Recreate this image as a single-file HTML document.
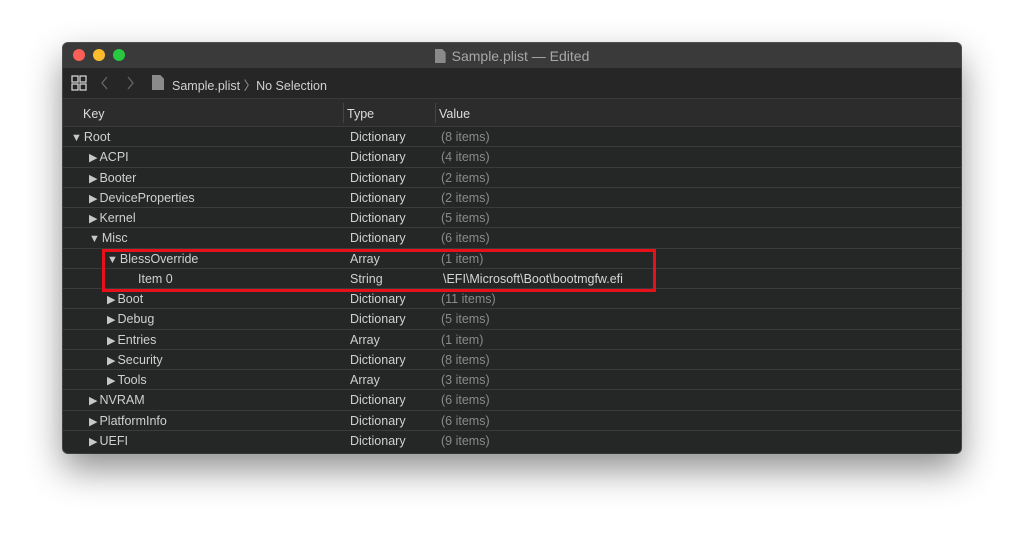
<!DOCTYPE html>
<html><head><meta charset="utf-8"><style>
*{margin:0;padding:0;box-sizing:border-box}
body{width:1024px;height:537px;background:#fff;font-family:"Liberation Sans",sans-serif;position:relative;overflow:hidden}
.win{position:absolute;left:63px;top:43px;width:898px;height:410px;background:#252626;border-radius:5px;overflow:hidden;box-shadow:0 16px 36px rgba(0,0,0,.45),0 0 0 1px #555;}
.title{position:absolute;left:0;top:0;width:100%;height:25px;background:#3a3a3a;}
.title .t{position:absolute;left:0;width:100%;top:5px;text-align:center;color:#a8a8a8;font-size:14px}
.dot{position:absolute;top:6px;width:12px;height:12px;border-radius:50%}
.tool{position:absolute;left:0;top:25px;width:100%;height:31px;background:#262626;border-bottom:1px solid #3a3a3a}
.hdr{position:absolute;left:0;top:56px;width:100%;height:28px;background:#2c2c2c;border-bottom:1px solid #3c3c3c;color:#dcdcdc;font-size:12.5px}
.hdr span{position:absolute;top:8px}
.sep{position:absolute;top:4px;width:1px;height:20px;background:#444}
.row{position:absolute;left:0;width:100%;height:20.25px;border-bottom:1px solid #3a3b3b;font-size:12.5px;color:#d0d0d0}
.row>span{position:absolute;top:3px;white-space:nowrap}
.row .v{left:378px;color:#8a8a8a}
.row .ty{left:287px}
.row .tri{position:static;font-size:11px;color:#c8c8c8;margin-right:2px;vertical-align:0px}
</style></head><body>
<div class="win">
 <div class="title">
  <div class="dot" style="left:10px;background:#fc5f57"></div>
  <div class="dot" style="left:30px;background:#fdbc2e"></div>
  <div class="dot" style="left:50px;background:#28c840"></div>
  <div class="t"><span style="display:inline-block;width:11px;height:14px;background:#8a8a8a;vertical-align:-2px;margin-right:6px;clip-path:polygon(0 0,70% 0,100% 25%,100% 100%,0 100%)"></span>Sample.plist — Edited</div>
 </div>
 <div class="tool">
  <svg style="position:absolute;left:8px;top:7px" width="16" height="16" fill="none" stroke="#ddd" stroke-width="1.2"><rect x="1" y="1" width="6" height="6"/><rect x="9" y="1" width="6" height="6"/><rect x="1" y="9" width="6" height="6"/><rect x="9" y="9" width="6" height="6"/></svg>
  <svg style="position:absolute;left:37px;top:7px" width="40" height="16" fill="none" stroke="#666" stroke-width="1.3"><path d="M7 2L2 8l5 6"/><path d="M28 2l5 6-5 6"/></svg>
  <span style="position:absolute;left:89px;top:7px;width:12px;height:15px;background:#8a8a8a;clip-path:polygon(0 0,70% 0,100% 25%,100% 100%,0 100%)"></span>
  <span style="position:absolute;left:109px;top:7px;font-size:12.5px;color:#d0d0d0">Sample.plist <span style="color:#999">〉</span>No Selection</span>
 </div>
 <div class="hdr">
  <span style="left:20px">Key</span>
  <div class="sep" style="left:280px"></div><span style="left:284px">Type</span>
  <div class="sep" style="left:372px"></div><span style="left:376px">Value</span>
 </div>
 <div class="row" style="top:84px"><span style="left:8px"><span class="tri">▼</span>Root</span><span class="ty">Dictionary</span><span class="v">(8 items)</span></div>
 <div class="row" style="top:104.25px"><span style="left:26px"><span class="tri">▶</span>ACPI</span><span class="ty">Dictionary</span><span class="v">(4 items)</span></div>
 <div class="row" style="top:124.5px"><span style="left:26px"><span class="tri">▶</span>Booter</span><span class="ty">Dictionary</span><span class="v">(2 items)</span></div>
 <div class="row" style="top:144.75px"><span style="left:26px"><span class="tri">▶</span>DeviceProperties</span><span class="ty">Dictionary</span><span class="v">(2 items)</span></div>
 <div class="row" style="top:165px"><span style="left:26px"><span class="tri">▶</span>Kernel</span><span class="ty">Dictionary</span><span class="v">(5 items)</span></div>
 <div class="row" style="top:185.25px"><span style="left:26px"><span class="tri">▼</span>Misc</span><span class="ty">Dictionary</span><span class="v">(6 items)</span></div>
 <div class="row" style="top:205.5px"><span style="left:44px"><span class="tri">▼</span>BlessOverride</span><span class="ty">Array</span><span class="v">(1 item)</span></div>
 <div class="row" style="top:225.75px"><span style="left:75px">Item 0</span><span class="ty">String</span><span class="v" style="left:380px;color:#d6d6d6">\EFI\Microsoft\Boot\bootmgfw.efi</span></div>
 <div class="row" style="top:246px"><span style="left:44px"><span class="tri">▶</span>Boot</span><span class="ty">Dictionary</span><span class="v">(11 items)</span></div>
 <div class="row" style="top:266.25px"><span style="left:44px"><span class="tri">▶</span>Debug</span><span class="ty">Dictionary</span><span class="v">(5 items)</span></div>
 <div class="row" style="top:286.5px"><span style="left:44px"><span class="tri">▶</span>Entries</span><span class="ty">Array</span><span class="v">(1 item)</span></div>
 <div class="row" style="top:306.75px"><span style="left:44px"><span class="tri">▶</span>Security</span><span class="ty">Dictionary</span><span class="v">(8 items)</span></div>
 <div class="row" style="top:327px"><span style="left:44px"><span class="tri">▶</span>Tools</span><span class="ty">Array</span><span class="v">(3 items)</span></div>
 <div class="row" style="top:347.25px"><span style="left:26px"><span class="tri">▶</span>NVRAM</span><span class="ty">Dictionary</span><span class="v">(6 items)</span></div>
 <div class="row" style="top:367.5px"><span style="left:26px"><span class="tri">▶</span>PlatformInfo</span><span class="ty">Dictionary</span><span class="v">(6 items)</span></div>
 <div class="row" style="top:387.75px;border-bottom:none"><span style="left:26px"><span class="tri">▶</span>UEFI</span><span class="ty">Dictionary</span><span class="v">(9 items)</span></div>
 <div style="position:absolute;left:39px;top:206px;width:554px;height:43px;border:3px solid #e8101a"></div>
</div>
</body></html>
